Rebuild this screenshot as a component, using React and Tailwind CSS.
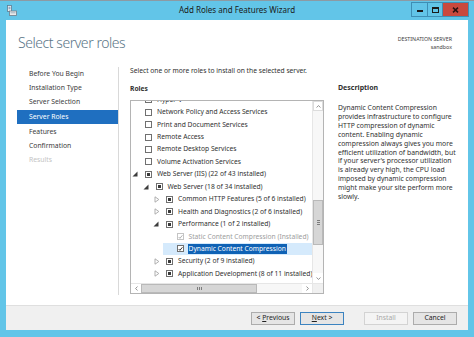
const navItems = [
  { label: 'Before You Begin' },
  { label: 'Installation Type' },
  { label: 'Server Selection' },
  { label: 'Server Roles', active: true },
  { label: 'Features' },
  { label: 'Confirmation' },
  { label: 'Results', disabled: true },
];

const roles = [
  { label: 'Hyper-V', level: 0, box: 'empty' },
  { label: 'Network Policy and Access Services', level: 0, box: 'empty' },
  { label: 'Print and Document Services', level: 0, box: 'empty' },
  { label: 'Remote Access', level: 0, box: 'empty' },
  { label: 'Remote Desktop Services', level: 0, box: 'empty' },
  { label: 'Volume Activation Services', level: 0, box: 'empty' },
  { label: 'Web Server (IIS) (22 of 43 installed)', level: 0, box: 'partial', exp: 'open' },
  { label: 'Web Server (18 of 34 installed)', level: 1, box: 'partial', exp: 'open' },
  { label: 'Common HTTP Features (5 of 6 installed)', level: 2, box: 'partial', exp: 'closed' },
  { label: 'Health and Diagnostics (2 of 6 installed)', level: 2, box: 'partial', exp: 'closed' },
  { label: 'Performance (1 of 2 installed)', level: 2, box: 'partial', exp: 'open' },
  { label: 'Static Content Compression (Installed)', level: 3, box: 'disabled' },
  { label: 'Dynamic Content Compression', level: 3, box: 'checked', selected: true },
  { label: 'Security (2 of 9 installed)', level: 2, box: 'partial', exp: 'closed' },
  { label: 'Application Development (8 of 11 installed)', level: 2, box: 'partial', exp: 'closed' },
];

const indent = ['w-0', 'w-[10.5px]', 'w-[21px]', 'w-[31.5px]'];

const description =
  "Dynamic Content Compression provides infrastructure to configure HTTP compression of dynamic content. Enabling dynamic compression always gives you more efficient utilization of bandwidth, but if your server's processor utilization is already very high, the CPU load imposed by dynamic compression might make your site perform more slowly.";

function Expander({ state }) {
  if (state === 'open') {
    return (
      <svg width="6" height="6" viewBox="0 0 6 6" className="ml-[1px]">
        <polygon points="5.5,0.5 5.5,5.5 0.5,5.5" fill="#3c3c3c" />
      </svg>
    );
  }
  if (state === 'closed') {
    return (
      <svg width="6" height="7" viewBox="0 0 6 7" className="ml-[2px]">
        <polygon points="1,0.8 4.8,3.5 1,6.2" fill="none" stroke="#a6a6a6" strokeWidth="0.9" />
      </svg>
    );
  }
  return null;
}

function CheckBox({ state }) {
  const disabled = state === 'disabled';
  return (
    <span
      className={`flex h-[7px] w-[7px] shrink-0 items-center justify-center border bg-white ${
        disabled ? 'border-[#c4c4c4]' : 'border-[#707070]'
      }`}
    >
      {state === 'partial' && <span className="h-[3px] w-[3px] bg-[#3a3a3a]" />}
      {(state === 'checked' || disabled) && (
        <svg width="6" height="6" viewBox="0 0 6 6">
          <polyline
            points="0.8,3 2.3,4.6 5.3,0.9"
            fill="none"
            stroke={disabled ? '#a8a8a8' : '#222'}
            strokeWidth="1.1"
          />
        </svg>
      )}
    </span>
  );
}

function RoleRow({ role }) {
  return (
    <div className="flex h-[12.45px] items-center whitespace-nowrap">
      <span className={`${indent[role.level]} shrink-0`} />
      <div
        className={`flex h-full flex-1 items-center ${role.selected ? 'bg-[#d5eafc]' : ''}`}
      >
        <span className="flex w-[14px] shrink-0 items-center">
          <Expander state={role.exp} />
        </span>
        <CheckBox state={role.box} />
        <span
          className={`ml-[4px] px-[1px] leading-[10px] ${
            role.selected
              ? 'bg-[#0f62b5] text-white'
              : role.box === 'disabled'
              ? 'text-[#9d9d9d]'
              : 'text-[#303030]'
          }`}
        >
          {role.label}
        </span>
      </div>
    </div>
  );
}

function WinButton({ children, primary, disabled }) {
  return (
    <button
      type="button"
      className={`flex h-[13px] w-[44px] items-center justify-center border text-[6.8px] leading-none ${
        disabled
          ? 'border-[#d3d3d3] bg-[#f4f4f4] text-[#a8a8a8]'
          : primary
          ? 'border-[#3b83c0] bg-[#e5e5e5] text-[#222]'
          : 'border-[#acacac] bg-[#e5e5e5] text-[#222]'
      }`}
    >
      {children}
    </button>
  );
}

export default function App() {
  return (
    <div className="flex h-[337px] w-[474px] flex-col overflow-hidden border-t border-[#8c9aa3] bg-[#62c5e8] font-['Noto_Sans','Open_Sans',sans-serif] text-[#303030]">
      {/* title bar */}
      <div className="relative flex h-[19px] shrink-0 items-center">
        <svg width="10" height="11" viewBox="0 0 10 11" className="ml-[7px]">
          <rect x="0.5" y="0.5" width="4" height="6" fill="#f2f2f2" stroke="#5d7d93" strokeWidth="0.8" />
          <rect x="1.5" y="1.8" width="2" height="0.8" fill="#4f7fa8" />
          <rect x="1.5" y="3.4" width="2" height="0.8" fill="#4f7fa8" />
          <rect x="2.5" y="6" width="7" height="4.5" fill="#eaeaea" stroke="#6b7d8a" strokeWidth="0.8" />
          <rect x="3.5" y="7.3" width="5" height="1" fill="#a1b4c2" />
        </svg>
        <div className="absolute inset-x-0 top-[3px] text-center text-[8px] leading-[12px] text-[#1a1a1a]">
          Add Roles and Features Wizard
        </div>
        <div className="absolute right-[5px] top-[1px] flex h-[15px] border border-[#3e8fb5]">
          <div className="flex w-[15px] items-end justify-center bg-[#62c5e8] pb-[4px]">
            <span className="h-[2px] w-[6px] bg-[#1b1b1b]" />
          </div>
          <div className="flex w-[15px] items-center justify-center border-l border-[#3e8fb5] bg-[#62c5e8]">
            <span className="h-[6px] w-[7px] border-[1.5px] border-t-[2.5px] border-[#1b1b1b]" />
          </div>
          <div className="flex w-[26px] items-center justify-center border-l border-[#3e8fb5] bg-[#c9493e]">
            <svg width="7" height="6" viewBox="0 0 7 6">
              <path d="M1 0.6 L6 5.4 M6 0.6 L1 5.4" stroke="#2b1212" strokeWidth="1.5" />
            </svg>
          </div>
        </div>
      </div>

      {/* client area */}
      <div className="mx-[6px] mb-[7px] flex flex-1 flex-col bg-white">
        {/* header */}
        <div className="flex h-[40px] shrink-0 items-start justify-between pl-[12px] pr-[16px]">
          <div className="mt-[13px] text-[14px] font-light leading-[20px] tracking-[-0.45px] text-[#5a7587]">
            Select server roles
          </div>
          <div className="mt-[15px] text-right text-[5.3px] leading-[8px] text-[#404040]">
            <div>DESTINATION SERVER</div>
            <div>sandbox</div>
          </div>
        </div>

        {/* main */}
        <div className="flex flex-1">
          <div className="w-[112px] shrink-0 pl-[11px] pt-[7px]">
            {navItems.map((item) => (
              <div
                key={item.label}
                className={`flex h-[14.2px] items-center pl-[12px] text-[6.8px] ${
                  item.active
                    ? 'h-[13px] my-[0.6px] bg-[#1f6fc0] text-white'
                    : item.disabled
                    ? 'text-[#c3c3c3]'
                    : 'text-[#3a3a3a]'
                }`}
              >
                {item.label}
              </div>
            ))}
          </div>
          <div className="mt-[7px] mb-[10px] w-px bg-[#d9d9d9]" />

          <div className="flex flex-1 flex-col pl-[11px] text-[6.7px]">
            <div className="mt-[6px] h-[10px] leading-[10px]">
              Select one or more roles to install on the selected server.
            </div>
            <div className="flex">
              <div className="w-[194px] shrink-0">
                <div className="mt-[8px] h-[10px] font-bold leading-[10px]">Roles</div>
                {/* list box */}
                <div className="mt-[6px] flex h-[194px] flex-col border border-[#b4b4b4]">
                  <div className="flex flex-1 overflow-hidden">
                    <div className="flex-1 overflow-hidden">
                      <div className="-mt-[7.5px]">
                        {roles.map((role) => (
                          <RoleRow key={role.label} role={role} />
                        ))}
                      </div>
                    </div>
                    {/* vertical scrollbar */}
                    <div className="flex w-[11px] shrink-0 flex-col border-l border-[#e6e6e6] bg-[#f7f7f7]">
                      <div className="flex h-[10px] items-center justify-center border border-[#dcdcdc] bg-white">
                        <svg width="5" height="3" viewBox="0 0 5 3">
                          <polyline points="0.5,2.5 2.5,0.6 4.5,2.5" fill="none" stroke="#7a7a7a" strokeWidth="0.8" />
                        </svg>
                      </div>
                      <div className="h-[89px]" />
                      <div className="flex h-[45px] items-center justify-center border border-[#b9b9b9] bg-[#d6d6d6]">
                        <div className="flex flex-col gap-[1px]">
                          <span className="h-px w-[3px] bg-[#7c7c7c]" />
                          <span className="h-px w-[3px] bg-[#7c7c7c]" />
                          <span className="h-px w-[3px] bg-[#7c7c7c]" />
                        </div>
                      </div>
                      <div className="flex-1" />
                      <div className="flex h-[10px] items-center justify-center bg-white">
                        <svg width="5" height="3" viewBox="0 0 5 3">
                          <polyline points="0.5,0.5 2.5,2.4 4.5,0.5" fill="none" stroke="#7a7a7a" strokeWidth="0.8" />
                        </svg>
                      </div>
                    </div>
                  </div>
                  {/* horizontal scrollbar */}
                  <div className="flex h-[10px] shrink-0 border-t border-[#e6e6e6] bg-[#f7f7f7]">
                    <div className="flex w-[10px] items-center justify-center bg-white">
                      <svg width="3" height="5" viewBox="0 0 3 5">
                        <polyline points="2.5,0.5 0.6,2.5 2.5,4.5" fill="none" stroke="#7a7a7a" strokeWidth="0.8" />
                      </svg>
                    </div>
                    <div className="flex w-[116px] items-center justify-center border border-[#b9b9b9] bg-[#d6d6d6]">
                      <div className="flex gap-[1px]">
                        <span className="h-[3px] w-px bg-[#7c7c7c]" />
                        <span className="h-[3px] w-px bg-[#7c7c7c]" />
                        <span className="h-[3px] w-px bg-[#7c7c7c]" />
                      </div>
                    </div>
                    <div className="flex-1" />
                    <div className="flex w-[10px] items-center justify-center bg-white">
                      <svg width="3" height="5" viewBox="0 0 3 5">
                        <polyline points="0.5,0.5 2.4,2.5 0.5,4.5" fill="none" stroke="#7a7a7a" strokeWidth="0.8" />
                      </svg>
                    </div>
                    <div className="w-[11px] border-l border-[#e6e6e6] bg-[#f0f0f0]" />
                  </div>
                </div>
              </div>

              <div className="ml-[14px] w-[118px]">
                <div className="mt-[7px] h-[10px] text-[7px] font-bold leading-[10px]">Description</div>
                <p className="mt-[11px] text-[6.8px] leading-[8.9px] text-[#303030]">{description}</p>
              </div>
            </div>
          </div>
        </div>

        {/* button bar */}
        <div className="flex h-[25px] shrink-0 items-center justify-end border-t border-[#dfdfdf] bg-[#f0f0f0] pr-[11px]">
          <WinButton>
            &lt;&nbsp;<span className="underline">P</span>revious
          </WinButton>
          <div className="ml-[5px]">
            <WinButton primary>
              <span className="underline">N</span>ext &gt;
            </WinButton>
          </div>
          <div className="ml-[20px]">
            <WinButton disabled>Install</WinButton>
          </div>
          <div className="ml-[5px]">
            <WinButton>Cancel</WinButton>
          </div>
        </div>
      </div>
    </div>
  );
}
